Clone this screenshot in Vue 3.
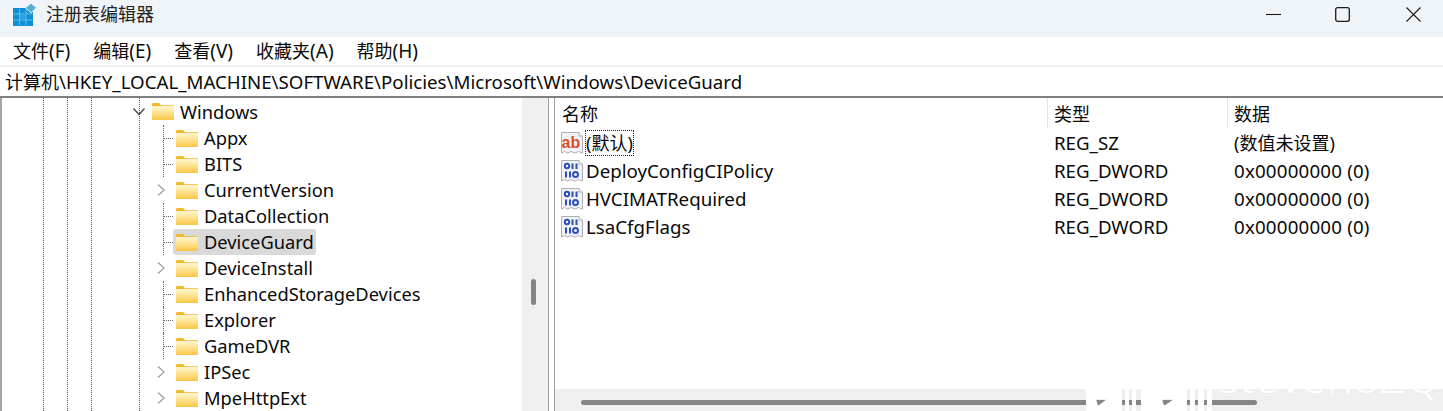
<script setup>
const menus = [
  { zh: '文件', key: '(F)' },
  { zh: '编辑', key: '(E)' },
  { zh: '查看', key: '(V)' },
  { zh: '收藏夹', key: '(A)' },
  { zh: '帮助', key: '(H)' }
]
const guides = [43, 67, 91, 139]
const tree = [
  { name: 'Appx', line: true },
  { name: 'BITS', line: true },
  { name: 'CurrentVersion', arrow: true },
  { name: 'DataCollection', line: true },
  { name: 'DeviceGuard', line: true, selected: true },
  { name: 'DeviceInstall', arrow: true },
  { name: 'EnhancedStorageDevices', line: true },
  { name: 'Explorer', line: true },
  { name: 'GameDVR', line: true },
  { name: 'IPSec', arrow: true },
  { name: 'MpeHttpExt', arrow: true }
]
const values = [
  { name: '(默认)', type: 'REG_SZ', data: '(数值未设置)', text: true },
  { name: 'DeployConfigCIPolicy', type: 'REG_DWORD', data: '0x00000000 (0)' },
  { name: 'HVCIMATRequired', type: 'REG_DWORD', data: '0x00000000 (0)' },
  { name: 'LsaCfgFlags', type: 'REG_DWORD', data: '0x00000000 (0)' }
]
</script>

<template>
  <div class="window">
    <header class="titlebar">
      <svg class="app-icon" width="24" height="23" viewBox="0 0 24 23">
        <rect x="0" y="5" width="20" height="18" fill="#0f8fd6" />
        <path d="M0.5 11h19M0.5 17h19M6.5 6v16M13 6v16" stroke="#63c0ec" stroke-width="1" />
        <rect x="7" y="11.5" width="5.5" height="5" fill="#2fa3e4" />
        <path d="M18 0l5.5 4.8L18 10l-5.5-5.2z" fill="#55aedb" stroke="#fff" stroke-width=".8" />
      </svg>
      <span class="title">注册表编辑器</span>
      <div class="controls">
        <svg width="15" height="15" viewBox="0 0 15 15"><path d="M0 7.5h15" stroke="#1b1b1b" stroke-width="1.1" /></svg>
        <svg width="15" height="15" viewBox="0 0 15 15"><rect x=".7" y=".7" width="13.6" height="13.6" rx="2" fill="none" stroke="#1b1b1b" stroke-width="1.3" /></svg>
        <svg class="close" width="15" height="15" viewBox="0 0 15 15"><path d="M.5.5l14 14M14.5.5l-14 14" stroke="#1b1b1b" stroke-width="1.1" /></svg>
      </div>
    </header>

    <nav class="menubar">
      <span v-for="m in menus" :key="m.zh">{{ m.zh }}<b class="key">{{ m.key }}</b></span>
    </nav>

    <div class="address">计算机<span class="latin">\HKEY_LOCAL_MACHINE\SOFTWARE\Policies\Microsoft\Windows\DeviceGuard</span></div>

    <main class="body">
      <section class="tree-pane">
        <div class="tree">
          <i v-for="g in guides" :key="g" class="guide" :style="{ left: g + 'px' }"></i>
          <div class="row parent">
            <svg class="chev open" width="14" height="10" viewBox="0 0 14 10"><path d="M1.5 1.5L7 7.5l5.5-6" fill="none" stroke="#404040" stroke-width="1.2" /></svg>
            <svg class="folder" width="22" height="17" viewBox="0 0 22 17">
              <defs>
                <linearGradient id="fg" x1="0" y1="0" x2="0" y2="1">
                  <stop offset="0" stop-color="#fff6cf" />
                  <stop offset=".55" stop-color="#fedf86" />
                  <stop offset="1" stop-color="#f9c544" />
                </linearGradient>
              </defs>
              <path d="M0 1.2C0 .5.5 0 1.2 0H7l2 2.2h13V4H0z" fill="#f0b92e" />
              <rect x="0" y="3" width="22" height="14" fill="url(#fg)" />
            </svg>
            <span>Windows</span>
          </div>
          <div v-for="t in tree" :key="t.name" class="row child">
            <i v-if="t.line" class="tick"></i>
            <i v-if="t.line" class="stem"></i>
            <svg v-if="t.arrow" class="chev" width="10" height="14" viewBox="0 0 10 14"><path d="M2 1.5L8 7l-6 5.5" fill="none" stroke="#a0a0a0" stroke-width="1.3" /></svg>
            <div class="entry" :class="{ selected: t.selected }">
              <svg class="folder" width="22" height="17" viewBox="0 0 22 17">
                <path d="M0 1.2C0 .5.5 0 1.2 0H7l2 2.2h13V4H0z" fill="#f0b92e" />
                <rect x="0" y="3" width="22" height="14" fill="url(#fg)" />
              </svg>
              <span>{{ t.name }}</span>
            </div>
          </div>
        </div>
        <div class="vscroll"><i></i></div>
      </section>

      <section class="list-pane">
        <div class="list-head">
          <span class="c1">名称</span>
          <span class="c2">类型</span>
          <span class="c3">数据</span>
        </div>
        <div class="list">
          <div v-for="v in values" :key="v.name" class="list-row">
            <div class="c1 cell">
              <svg class="reg" width="24" height="24" viewBox="0 0 24 24">
                <path d="M1.5 1.5h17.5l3.5 3.5v17l-4-1.5-3.5 1.5-4-1.5-3.5 1.5-3-1.5-3 1.5z" fill="#f1f1f6" stroke="#aeaeb4" stroke-width="1" />
                <path d="M19 1.5v3.5h3.5" fill="#fff" stroke="#aeaeb4" stroke-width="1" />
                <text v-if="v.text" x="1.5" y="16.5" class="ab">ab</text>
                <g v-else fill="none" stroke="#2c50bd" stroke-width="2">
                  <circle cx="7" cy="7" r="2.2" />
                  <path d="M12.5 4.5v5.5M16.5 4.5v5.5M6 12.5v6M10 12.5v6" />
                  <circle cx="15.5" cy="15.5" r="2.5" />
                </g>
              </svg>
              <span class="name" :class="{ focus: v.text, latin: !v.text }">{{ v.name }}</span>
            </div>
            <span class="c2 latin">{{ v.type }}</span>
            <span class="c3" :class="{ num: !v.text }">{{ v.data }}</span>
          </div>
        </div>
        <div class="hscroll"><i></i></div>
        <svg class="wm-icon" width="126" height="22" viewBox="0 0 126 22">
          <path fill="#fff" fill-rule="evenodd" d="M0 0H36V22H0zM10 10L21 10 12 17zM55 0H101V22H55zM76 10L88 10 78 17z" />
          <path fill="#fff" d="M39 0h4v22h-4zM46 0h4v22h-4zM104 0h5v22h-5zM112 0h6v22h-6zM121 0h5v22h-5z" />
        </svg>
        <span class="wm-text">steven8ZQ</span>
      </section>
    </main>
  </div>
</template>

<style>
html, body { margin: 0; background: #fff; overflow: hidden; }
</style>

<style scoped>
.window {
  width: 1443px;
  height: 411px;
  display: flex;
  flex-direction: column;
  overflow: hidden;
  background: #fff;
  color: #0a0a0a;
  font: 18px/24px "Noto Sans", "Noto Sans CJK SC", sans-serif;
}
.latin { font-size: 18.7px; }
.titlebar {
  height: 37px;
  flex: none;
  display: flex;
  align-items: center;
  background: #eff4f9;
  padding-left: 13px;
  box-sizing: border-box;
}
.app-icon { margin-top: -8px; }
.title { margin-left: 9px; font-size: 18px; margin-top: -9px; color: #222; }
.controls {
  margin-left: auto;
  display: flex;
  gap: 54px;
  padding-right: 22px;
  margin-top: -8px;
}
.close { margin-left: 2px; }
.menubar {
  height: 28px;
  flex: none;
  display: flex;
  gap: 23px;
  align-items: center;
  padding-left: 13px;
}
.key { font-weight: 400; font-size: 19px; }
.address {
  height: 29px;
  flex: none;
  border-top: 2px solid #f0f0f0;
  border-bottom: 2px solid #808080;
  padding-left: 5px;
  line-height: 30px;
  white-space: nowrap;
}
.body {
  flex: 1;
  min-height: 0;
  display: flex;
  overflow: hidden;
}
.tree-pane {
  width: 549px;
  flex: none;
  display: flex;
  box-sizing: border-box;
  border-right: 1px solid #a0a0a0;
  font-size: 18.3px;
}
.tree {
  position: relative;
  flex: 1;
  border-left: 2px solid #a5a5a5;
  overflow: hidden;
}
.guide {
  position: absolute;
  top: 0;
  bottom: 0;
  width: 0;
  margin-left: -2px;
  border-left: 1px dotted #555;
}
.row {
  position: relative;
  height: 26px;
  display: flex;
  align-items: center;
  white-space: nowrap;
}
.parent { padding-left: 130px; height: 27px; }
.parent .chev { margin-right: 6px; }
.parent .folder { margin-right: 6px; }
.child { padding-left: 171px; }
.chev { flex: none; }
.child .chev { position: absolute; left: 154px; top: 6px; }
.tick {
  position: absolute;
  left: 161px;
  top: 13px;
  width: 10px;
  border-top: 1px dotted #666;
}
.stem {
  position: absolute;
  left: 161px;
  top: 0;
  height: 26px;
  border-left: 1px dotted #666;
}
.entry {
  display: flex;
  align-items: center;
  height: 26px;
  padding: 0 2px 0 3px;
  border-radius: 3px;
  gap: 6px;
}
.entry.selected { background: #d9d9d9; }
.vscroll {
  width: 26px;
  flex: none;
  background: #f0f0f0;
  position: relative;
}
.vscroll i {
  position: absolute;
  left: 9px;
  top: 181px;
  width: 5px;
  height: 26px;
  border-radius: 3px;
  background: #858585;
}
.list-pane {
  position: relative;
  flex: 1;
  margin-left: 5px;
  border-left: 1px solid #a0a0a0;
  display: flex;
  flex-direction: column;
}
.list-head {
  height: 30px;
  flex: none;
  display: grid;
  grid-template-columns: 492px 180px 1fr;
  align-items: center;
}
.list-head span { padding-left: 7px; height: 30px; line-height: 32px; box-sizing: border-box; }
.list-head .c2, .list-head .c3 { border-left: 1px solid #e5e5e5; padding-left: 6px; }
.list { flex: 1; padding-top: 1px; }
.list-row {
  height: 28px;
  display: grid;
  grid-template-columns: 492px 180px 1fr;
  align-items: center;
}
.list-row > .c2, .list-row > .c3 { padding-left: 7px; }
.num { font-size: 18.7px; letter-spacing: .2px; }
.cell {
  display: flex;
  align-items: center;
  padding-left: 5px;
  gap: 1px;
}
.reg { flex: none; }
.ab {
  font: 700 16px "Liberation Sans", sans-serif;
  fill: #d8502c;
}
.name { padding: 0 1px; height: 26px; line-height: 26px; box-sizing: border-box; }
.name.focus { outline: 1px dotted #222; outline-offset: -1px; }
.hscroll {
  height: 22px;
  flex: none;
  background: #efefef;
  position: relative;
}
.hscroll i {
  position: absolute;
  left: 26px;
  top: 11px;
  width: 676px;
  height: 5px;
  border-radius: 3px;
  background: #858585;
}
.wm-icon {
  position: absolute;
  left: 531px;
  bottom: 0;
  pointer-events: none;
}
.wm-text {
  position: absolute;
  left: 663px;
  top: 256px;
  color: #fff;
  font: 300 44px/44px "Open Sans", sans-serif;
  letter-spacing: 1px;
  white-space: nowrap;
  pointer-events: none;
}
</style>
